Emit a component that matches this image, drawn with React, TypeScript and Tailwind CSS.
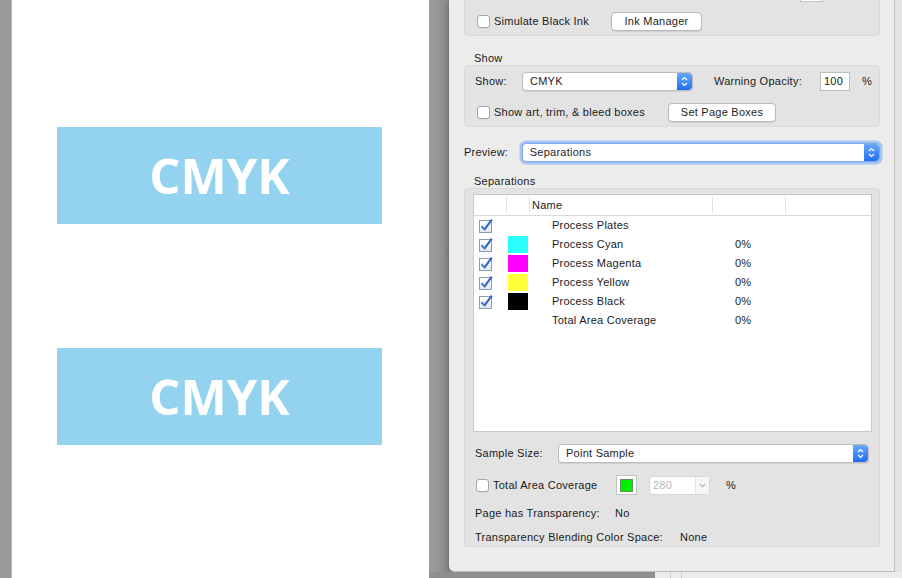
import React from "react";

const font = "font-['Liberation_Sans',Arial,sans-serif] tracking-[0.25px]";

function Checkbox() {
  return (
    <span className="block h-[13px] w-[13px] shrink-0 rounded-[3px] border border-[#a6a6a6] bg-white shadow-[0_1px_0_rgba(0,0,0,0.04)]" />
  );
}

function CheckedBox() {
  return (
    <svg width="15" height="15" viewBox="0 0 15 15" className="shrink-0">
      <defs>
        <linearGradient id="cb" x1="0" y1="0" x2="0" y2="1">
          <stop offset="0" stopColor="#ffffff" />
          <stop offset="1" stopColor="#dfe8f3" />
        </linearGradient>
      </defs>
      <rect x="0.5" y="2.5" width="12" height="12" fill="url(#cb)" stroke="#8b9db3" />
      <path d="M2.6 8.2 L5.6 11.4 L12.8 1.6" fill="none" stroke="#2f67c2" strokeWidth="2.1" strokeLinejoin="round" />
      <path d="M3.4 8.4 L5.6 10.4" fill="none" stroke="#9ec0ee" strokeWidth="0.8" />
    </svg>
  );
}

function Button({ label, w }: { label: string; w: string }) {
  return (
    <div
      className={`flex h-[19px] ${w} items-center justify-center rounded-[4px] border border-[#b9b9b9] bg-white text-[11px] text-[#1e1e1e] shadow-[0_1px_0_rgba(0,0,0,0.08)]`}
    >
      {label}
    </div>
  );
}

function Stepper() {
  return (
    <div className="flex h-full w-[15px] items-center justify-center rounded-r-[4px] bg-gradient-to-b from-[#66a8fa] to-[#1f6ef0]">
      <svg width="7" height="11" viewBox="0 0 7 11">
        <path d="M1 4 L3.5 1.5 L6 4 M1 7 L3.5 9.5 L6 7" fill="none" stroke="#fff" strokeWidth="1.2" />
      </svg>
    </div>
  );
}

function Select({ value, w, focus }: { value: string; w: string; focus?: boolean }) {
  return (
    <div
      className={`flex h-[19px] ${w} items-stretch rounded-[4px] border bg-white ${
        focus
          ? "border-[#7aaaf0] shadow-[0_0_0_2.5px_rgba(110,160,240,0.55)]"
          : "border-[#bdbdbd] shadow-[0_1px_0_rgba(0,0,0,0.08)]"
      }`}
    >
      <div className="flex flex-1 items-center pl-[7px] text-[11px] text-[#1e1e1e]">{value}</div>
      <Stepper />
    </div>
  );
}

const rows = [
  { name: "Process Plates", check: true, color: null, pct: "" },
  { name: "Process Cyan", check: true, color: "bg-[#2affff]", pct: "0%" },
  { name: "Process Magenta", check: true, color: "bg-[#ff00ff]", pct: "0%" },
  { name: "Process Yellow", check: true, color: "bg-[#ffff3a]", pct: "0%" },
  { name: "Process Black", check: true, color: "bg-black", pct: "0%" },
  { name: "Total Area Coverage", check: false, color: null, pct: "0%" },
];

function SeparationsTable() {
  return (
    <div className="ml-[8px] mr-[7px] mt-[5px] h-[238px] border border-[#c9c9c9] bg-white">
      <div className="flex h-[21px] items-center border-b border-[#d9d9d9] text-[11px] text-[#222]">
        <div className="h-[16px] w-[33px] border-r border-[#e0e0e0]" />
        <div className="h-[16px] w-[23px] border-r border-[#e0e0e0]" />
        <div className="flex h-[16px] w-[183px] items-center border-r border-[#e0e0e0] pl-[2px]">Name</div>
        <div className="h-[16px] w-[73px] border-r border-[#e0e0e0]" />
      </div>
      {rows.map((r) => (
        <div key={r.name} className="flex h-[19px] items-center text-[11px] text-[#1a1a1a]">
          <div className="flex w-[34px] pl-[5px]">{r.check ? <CheckedBox /> : null}</div>
          <div className={`h-[17px] w-[20px] ${r.color ?? ""}`} />
          <div className="w-[207px] pl-[24px]">{r.name}</div>
          <div>{r.pct}</div>
        </div>
      ))}
    </div>
  );
}

function Dialog() {
  return (
    <div className={`${font} flex h-[572px] w-[446px] flex-col rounded-bl-[6px] border-r border-b border-[#bdbdbd] bg-[#ececec] pl-[15px] pr-[14px] text-[11px] text-[#1a1a1a] shadow-[0_2px_8px_rgba(0,0,0,0.35)]`}>
      {/* top group (mostly scrolled off) */}
      <div className="relative h-[36px] rounded-b-[4px] border-x border-b border-[#dadada] bg-[#e3e3e3]">
        <div className="absolute left-[335px] top-[-17px] h-[19px] w-[23px] border border-[#c4c4c4] bg-white" />
        <div className="flex items-center pl-[12px] pt-[12px]">
          <div className="flex w-[134px] items-center gap-[4px]">
            <Checkbox />
            <span>Simulate Black Ink</span>
          </div>
          <Button label="Ink Manager" w="w-[91px]" />
        </div>
      </div>

      <div className="h-[29px] pl-[10px] pt-[16px] leading-[13px]">Show</div>
      <div className="h-[62px] rounded-[4px] border border-[#dadada] bg-[#e3e3e3] pl-[10px] pt-[6px]">
        <div className="flex items-center">
          <span className="w-[47px]">Show:</span>
          <Select value="CMYK" w="w-[171px]" />
          <span className="ml-[21px] w-[106px]">Warning Opacity:</span>
          <div className="flex h-[19px] w-[30px] items-center border border-[#bdbdbd] bg-white pl-[3px]">100</div>
          <span className="ml-[12px]">%</span>
        </div>
        <div className="mt-[12px] flex items-center">
          <div className="flex w-[193px] items-center gap-[4px] pl-[2px]">
            <Checkbox />
            <span>Show art, trim, &amp; bleed boxes</span>
          </div>
          <Button label="Set Page Boxes" w="w-[108px]" />
        </div>
      </div>

      <div className="mt-[16px] flex items-center">
        <span className="w-[58px] pl-[-1px]">Preview:</span>
        <Select value="Separations" w="w-[360px]" focus />
      </div>

      <div className="h-[26px] pl-[10px] pt-[13px] leading-[13px]">Separations</div>
      <div className="h-[359px] rounded-[4px] border border-[#dadada] bg-[#e3e3e3]">
        <SeparationsTable />
        <div className="mt-[12px] flex items-center pl-[10px]">
          <span className="w-[83px]">Sample Size:</span>
          <Select value="Point Sample" w="w-[311px]" />
        </div>
        <div className="mt-[12px] flex h-[20px] items-center pl-[11px]">
          <div className="flex w-[140px] items-center gap-[4px]">
            <Checkbox />
            <span>Total Area Coverage</span>
          </div>
          <div className="flex h-[20px] w-[21px] items-center justify-center border border-[#c2c2c2] bg-white">
            <div className="h-[13px] w-[13px] border border-[#5f8f5f] bg-[#00f000]" />
          </div>
          <div className="ml-[12px] flex h-[19px] w-[61px] items-stretch rounded-[4px] border border-[#d6d6d6] bg-white text-[#b8b8b8]">
            <div className="flex flex-1 items-center pl-[3px]">280</div>
            <div className="flex w-[14px] items-center justify-center border-l border-[#e2e2e2] bg-[#f6f6f6]">
              <svg width="7" height="5" viewBox="0 0 7 5">
                <path d="M0.8 1 L3.5 3.8 L6.2 1" fill="none" stroke="#b0b0b0" strokeWidth="1.1" />
              </svg>
            </div>
          </div>
          <span className="ml-[16px] text-[#1a1a1a]">%</span>
        </div>
        <div className="mt-[12px] flex h-[13px] items-center pl-[10px] leading-[13px]">
          <span className="w-[140px]">Page has Transparency:</span>
          <span>No</span>
        </div>
        <div className="mt-[11px] flex h-[13px] items-center pl-[10px] leading-[13px]">
          <span className="w-[205px]">Transparency Blending Color Space:</span>
          <span>None</span>
        </div>
      </div>
    </div>
  );
}

function CmykBox() {
  return (
    <div className="flex h-[97px] w-[325px] items-center justify-center bg-[#93d3ef] font-['Open_Sans',sans-serif] text-[49px] font-bold leading-none text-white">
      CMYK
    </div>
  );
}

export default function App() {
  return (
    <div className="flex h-[578px] w-[902px] overflow-hidden bg-[#969696]">
      <div className="w-[12px] shrink-0 border-r border-[#b5b5b5] bg-[#999999]" />
      <div className="flex w-[417px] shrink-0 flex-col gap-[124px] bg-white pl-[45px] pt-[127px]">
        <CmykBox />
        <CmykBox />
      </div>
      <div className="flex flex-1 flex-col">
        <div className="flex h-[572px]">
          <div className="w-[20px] shrink-0 bg-gradient-to-r from-[#9c9c9c] to-[#8d8d8d]" />
          <Dialog />
          <div className="flex-1 bg-[#e4e4e4]" />
        </div>
        <div className="flex h-[6px]">
          <div className="w-[226px] bg-[#8e8e8e]" />
          <div className="flex flex-1 bg-[#ececec]">
            <div className="ml-[15px] w-px bg-[#cfcfcf]" />
            <div className="ml-[10px] w-px bg-[#cfcfcf]" />
          </div>
        </div>
      </div>
    </div>
  );
}
